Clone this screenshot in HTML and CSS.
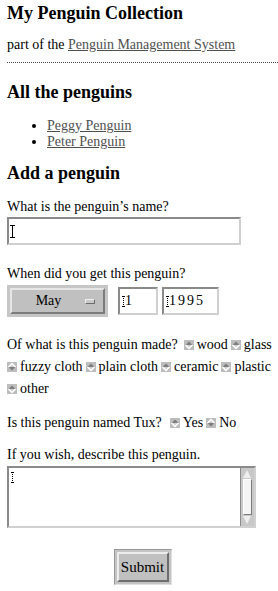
FILE: index.html
```html
<!DOCTYPE html>
<html>
<head>
<meta charset="utf-8">
<title>My Penguin Collection</title>
<link rel="stylesheet" href="styles.css">
</head>
<body>
<h1 class="title">My Penguin Collection</h1>
<p class="subtitle">part of the <a href="#" class="link">Penguin Management System</a></p>
<h2 class="heading">All the penguins</h2>
<ul class="plist">
  <li><a href="#" class="link">Peggy Penguin</a></li>
  <li><a href="#" class="link">Peter Penguin</a></li>
</ul>
<h2 class="heading heading-add">Add a penguin</h2>
<form class="form">
  <p class="q">What is the penguin’s name?</p>
  <div class="textbox name-box"><span class="ibeam"></span></div>

  <p class="q q-date">When did you get this penguin?</p>
  <div class="date-row">
    <div class="select"><div class="select-btn"><span class="select-text">May</span><span class="select-ind"></span></div></div>
    <div class="textbox day-box"><span class="ibeam dotted"></span><span class="val">1</span></div>
    <div class="textbox year-box"><span class="ibeam dotted"></span><span class="val mono">1995</span></div>
  </div>

  <p class="checks"><span class="lbl-gap">Of what is this penguin made?</span><svg class="cb" viewBox="0 0 10 10"><rect width="10" height="10" fill="#bdbdbd"/><polygon points="5,1.5 8.5,5 1.5,5" fill="#7e7e7e"/><polygon points="1.5,5 8.5,5 5,8.5" fill="#cfcfcf"/><polyline points="1.5,5 5,8.5 8.5,5" fill="none" stroke="#ffffff" stroke-width="1.4"/></svg><span class="opt">wood</span><svg class="cb" viewBox="0 0 10 10"><rect width="10" height="10" fill="#bdbdbd"/><polygon points="5,1.5 8.5,5 1.5,5" fill="#7e7e7e"/><polygon points="1.5,5 8.5,5 5,8.5" fill="#cfcfcf"/><polyline points="1.5,5 5,8.5 8.5,5" fill="none" stroke="#ffffff" stroke-width="1.4"/></svg><span class="opt">glass</span><br><svg class="cb" viewBox="0 0 10 10"><rect width="10" height="10" fill="#bdbdbd"/><polygon points="1.5,5 8.5,5 5,8.5" fill="#7e7e7e"/><polygon points="5,1.5 8.5,5 1.5,5" fill="#cfcfcf"/><polyline points="1.5,5 5,1.5 8.5,5" fill="none" stroke="#ffffff" stroke-width="1.4"/></svg><span class="opt">fuzzy cloth</span><svg class="cb" viewBox="0 0 10 10"><rect width="10" height="10" fill="#bdbdbd"/><polygon points="5,1.5 8.5,5 1.5,5" fill="#7e7e7e"/><polygon points="1.5,5 8.5,5 5,8.5" fill="#cfcfcf"/><polyline points="1.5,5 5,8.5 8.5,5" fill="none" stroke="#ffffff" stroke-width="1.4"/></svg><span class="opt">plain cloth</span><svg class="cb" viewBox="0 0 10 10"><rect width="10" height="10" fill="#bdbdbd"/><polygon points="5,1.5 8.5,5 1.5,5" fill="#7e7e7e"/><polygon points="1.5,5 8.5,5 5,8.5" fill="#cfcfcf"/><polyline points="1.5,5 5,8.5 8.5,5" fill="none" stroke="#ffffff" stroke-width="1.4"/></svg><span class="opt">ceramic</span><svg class="cb" viewBox="0 0 10 10"><rect width="10" height="10" fill="#bdbdbd"/><polygon points="5,1.5 8.5,5 1.5,5" fill="#7e7e7e"/><polygon points="1.5,5 8.5,5 5,8.5" fill="#cfcfcf"/><polyline points="1.5,5 5,8.5 8.5,5" fill="none" stroke="#ffffff" stroke-width="1.4"/></svg><span class="opt">plastic</span><br><svg class="cb" viewBox="0 0 10 10"><rect width="10" height="10" fill="#bdbdbd"/><polygon points="5,1.5 8.5,5 1.5,5" fill="#7e7e7e"/><polygon points="1.5,5 8.5,5 5,8.5" fill="#cfcfcf"/><polyline points="1.5,5 5,8.5 8.5,5" fill="none" stroke="#ffffff" stroke-width="1.4"/></svg><span class="opt">other</span></p>

  <p class="checks tux"><span class="lbl-gap tux-gap">Is this penguin named Tux?</span><svg class="cb" viewBox="0 0 10 10"><rect width="10" height="10" fill="#bdbdbd"/><polygon points="5,1.5 8.5,5 1.5,5" fill="#7e7e7e"/><polygon points="1.5,5 8.5,5 5,8.5" fill="#cfcfcf"/><polyline points="1.5,5 5,8.5 8.5,5" fill="none" stroke="#ffffff" stroke-width="1.4"/></svg><span class="opt">Yes</span><svg class="cb" viewBox="0 0 10 10"><rect width="10" height="10" fill="#bdbdbd"/><polygon points="1.5,5 8.5,5 5,8.5" fill="#7e7e7e"/><polygon points="5,1.5 8.5,5 1.5,5" fill="#cfcfcf"/><polyline points="1.5,5 5,1.5 8.5,5" fill="none" stroke="#ffffff" stroke-width="1.4"/></svg><span class="opt">No</span></p>

  <p class="q q-desc">If you wish, describe this penguin.</p>
  <div class="tarea">
    <div class="tarea-body"><span class="ibeam dotted"></span></div>
    <div class="sbar">
      <div class="sarrow up"></div>
      <div class="sthumb"></div>
      <div class="sarrow down"></div>
    </div>
  </div>

  <div class="submit-row">
    <div class="submit-ring"><div class="submit-btn">Submit</div></div>
  </div>
</form>
</body>
</html>
```
FILE: styles.css
```css
html, body {
  margin: 0;
  padding: 0;
  background: #fff;
}
body {
  padding: 0 0 0 7px;
  font-family: "Liberation Serif", "Times New Roman", serif;
  font-size: 14px;
  line-height: 16px;
  color: #000;
}
.link {
  color: #505050;
  text-decoration: underline;
}
.title {
  font-size: 18px;
  line-height: 22px;
  margin: 2px 0 0;
  font-weight: bold;
}
.subtitle {
  margin: 13px 0 0;
  padding-bottom: 9px;
  border-bottom: 1px dotted #444;
}
.heading {
  font-size: 18px;
  line-height: 22px;
  margin: 18px 0 0;
  font-weight: bold;
}
.plist {
  margin: 15px 0 0;
  padding-left: 40px;
  list-style: disc;
}
.heading-add {
  margin-top: 12px;
}
.form {
  margin: 0;
}
.q {
  margin: 15px 0 0;
}
.textbox {
  box-sizing: border-box;
  border-style: solid;
  border-width: 2px;
  border-color: #8a8a8a #d0d0d0 #d0d0d0 #8a8a8a;
  background: #fff;
  position: relative;
  display: flex;
  align-items: center;
}
.name-box {
  width: 234px;
  height: 28px;
  margin-top: 2px;
  padding-left: 3px;
}
.ibeam {
  display: inline-block;
  width: 1px;
  height: 13px;
  background: #000;
  position: relative;
  margin-right: 1px;
}
.ibeam::before, .ibeam::after {
  content: "";
  position: absolute;
  left: -2px;
  width: 5px;
  height: 1px;
  background: #000;
}
.ibeam::before { top: 0; }
.ibeam::after { bottom: 0; }
.ibeam.dotted {
  background: repeating-linear-gradient(#000 0 1px, transparent 1px 2px);
  height: 11px;
}
.ibeam.dotted::before, .ibeam.dotted::after {
  left: -1px;
  width: 3px;
}
.q-date {
  margin-top: 21px;
}
.date-row {
  display: flex;
  align-items: center;
  margin-top: 3px;
}
.select {
  box-sizing: border-box;
  width: 101px;
  height: 32px;
  padding: 3px;
  background: #c6c6c6;
}
.select-btn {
  box-sizing: border-box;
  height: 100%;
  background: #c0c0c0;
  border-style: solid;
  border-width: 2px;
  border-color: #e6e6e6 #7c7c7c #7c7c7c #e6e6e6;
  display: flex;
  align-items: center;
  position: relative;
}
.select-text {
  flex: 1;
  text-align: center;
  padding-left: 6px;
  padding-right: 6px;
  font-size: 14px;
}
.select-ind {
  box-sizing: border-box;
  width: 10px;
  height: 5px;
  border-style: solid;
  border-width: 1px;
  border-color: #f0f0f0 #6c6c6c #6c6c6c #f0f0f0;
  background: #c8c8c8;
  margin-right: 8px;
}
.day-box {
  width: 40px;
  height: 28px;
  margin-left: 10px;
  padding-left: 3px;
}
.year-box {
  width: 57px;
  height: 28px;
  margin-left: 4px;
  padding-left: 3px;
}
.val {
  font-size: 14px;
}
.mono {
  letter-spacing: 2px;
}
.checks {
  margin: 17px 0 0;
  line-height: 22px;
  white-space: nowrap;
}
.lbl-gap {
  margin-right: 6px;
}
.tux-gap {
  margin-right: 8px;
}
.cb {
  display: inline-block;
  width: 10px;
  height: 10px;
  vertical-align: -1px;
}
.opt {
  margin-left: 3px;
  margin-right: 3px;
}
.tux {
  margin-top: 12px;
}
.q-desc {
  margin-top: 13px;
}
.tarea {
  box-sizing: border-box;
  width: 249px;
  height: 62px;
  margin-top: 3px;
  display: flex;
  border-style: solid;
  border-width: 2px;
  border-color: #8a8a8a #d0d0d0 #d0d0d0 #8a8a8a;
}
.tarea-body {
  flex: 1;
  padding: 3px 0 0 3px;
  background: #fff;
}
.sbar {
  width: 13px;
  background: #c8c8c8;
  display: flex;
  flex-direction: column;
  border-left: 1px solid #8a8a8a;
}
.sarrow {
  height: 11px;
  position: relative;
}
.sarrow::before {
  content: "";
  position: absolute;
  left: 2px;
  width: 0;
  height: 0;
  border-left: 4px solid transparent;
  border-right: 4px solid transparent;
}
.sarrow.up::before {
  top: 2px;
  border-bottom: 8px solid #eee;
}
.sarrow.down::before {
  top: 1px;
  border-top: 8px solid #eee;
}
.sthumb {
  flex: 1;
  margin: 0 2px;
  box-sizing: border-box;
  background: #f4f4f4;
  border-style: solid;
  border-width: 1px;
  border-color: #fff #7c7c7c #7c7c7c #fff;
}
.submit-row {
  display: flex;
  justify-content: center;
  margin-top: 21px;
}
.submit-ring {
  box-sizing: border-box;
  width: 58px;
  height: 36px;
  padding: 2px;
  background: #c4c4c4;
  border: 1px solid #aaa;
  border-color: #999 #e0e0e0 #e0e0e0 #999;
}
.submit-btn {
  box-sizing: border-box;
  height: 100%;
  background: #c0c0c0;
  border-style: solid;
  border-width: 2px;
  border-color: #ececec #6e6e6e #6e6e6e #ececec;
  display: flex;
  align-items: center;
  justify-content: center;
  font-size: 15px;
}
```
